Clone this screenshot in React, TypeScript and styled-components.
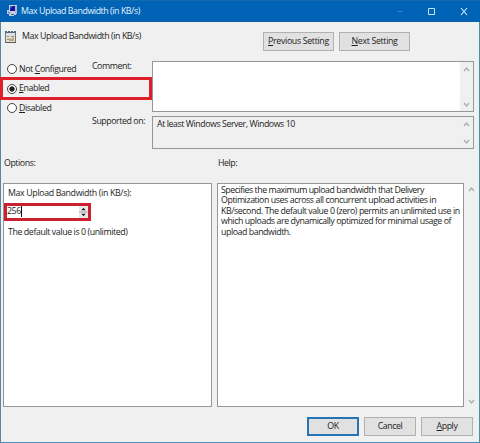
import React from "react";
import styled, { createGlobalStyle } from "styled-components";

const Global = createGlobalStyle`
  * { box-sizing: border-box; }
  body { margin: 0; overflow: hidden; }
`;

const Window = styled.div`
  width: 480px;
  height: 443px;
  display: flex;
  flex-direction: column;
  background: #f0f0f0;
  border: solid;
  border-width: 0 1px 1px;
  border-color: #357b9e #4593aa #4a8fbd #5588a0;
  font-family: "Open Sans", "Noto Sans", sans-serif;
  font-size: 8.8px;
  line-height: 13px;
  color: #1c1c1c;
`;

const Label = styled.span<{ $track?: number }>`
  white-space: nowrap;
  letter-spacing: ${(p) => p.$track ?? -0.43}px;
`;

const TitleBar = styled.header`
  height: 22px;
  flex: none;
  margin: 0 -1px;
  padding: 0 12px 0 7px;
  display: flex;
  align-items: center;
  background: #0063b5;
  border-top: 1px solid #1269ae;
  border-bottom: 1px solid #0a5da6;
  color: #e6f3ff;
`;

const TitleText = styled(Label)`
  margin-left: 3px;
  flex: 1;
`;

const Caption = styled.div`
  display: flex;
  align-items: center;
`;

const Header = styled.div`
  height: 39px;
  flex: none;
  display: flex;
  align-items: flex-start;
  padding: 9px 0 0 4px;
`;

const HeaderText = styled(Label)`
  margin: -1px 0 0 5px;
  width: 241px;
`;

const Button = styled.button<{ $primary?: boolean; $width?: number }>`
  width: ${(p) => p.$width ?? 52}px;
  height: 19px;
  flex: none;
  padding: 0 0 1px;
  display: flex;
  align-items: center;
  justify-content: center;
  font: inherit;
  color: #1c1c1c;
  background: #e1e1e1;
  border: ${(p) => (p.$primary ? "2px solid #2674b3" : "1px solid #b0b0b0")};
`;

const NavButtons = styled.div`
  display: flex;
  gap: 5px;
  margin: 1px 0 0 0;
`;

const Key = styled.span`
  text-decoration: underline;
  text-underline-offset: 1px;
  text-decoration-thickness: 1px;
`;

const Settings = styled.section`
  height: 88px;
  flex: none;
  display: grid;
  grid-template-columns: 91px 60px 322px;
`;

const RadioGroup = styled.div`
  display: flex;
  flex-direction: column;
`;

const Radio = styled.label<{ $marked?: boolean }>`
  height: ${(p) => (p.$marked ? 23 : 16)}px;
  width: ${(p) => (p.$marked ? "152px" : "auto")};
  margin-left: ${(p) => (p.$marked ? "-1px" : "0")};
  padding-left: ${(p) => (p.$marked ? "4px" : "6px")};
  border: ${(p) => (p.$marked ? "3px solid #df202a" : "none")};
  display: flex;
  align-items: center;
  gap: 2px;
`;

const Dot = styled.span<{ $on?: boolean }>`
  width: 10px;
  height: 10px;
  flex: none;
  border: 1px solid #444;
  border-radius: 50%;
  background: ${(p) => (p.$on ? "radial-gradient(circle, #222 0 2.3px, #fff 3px)" : "#fff")};
`;

const FieldLabels = styled.div`
  display: flex;
  flex-direction: column;
  gap: 42px;
  margin-top: -1px;
`;

const Fields = styled.div`
  display: flex;
  flex-direction: column;
  gap: 4px;
`;

const Field = styled.div<{ $height: number; $readOnly?: boolean }>`
  height: ${(p) => p.$height}px;
  display: flex;
  justify-content: space-between;
  border: 1px solid #969696;
  background: ${(p) => (p.$readOnly ? "#f0f0f0" : "#fff")};
`;

const FieldText = styled(Label)`
  padding: 1px 0 0 4px;
`;

const Scroll = styled.div<{ $outer?: boolean }>`
  width: ${(p) => (p.$outer ? 12 : 13)}px;
  padding: ${(p) => (p.$outer ? "4px 0 3px" : "5px 0 4px")};
  display: flex;
  flex-direction: column;
  align-items: center;
  justify-content: space-between;
  background: #f0f0f0;
`;

const SectionLabels = styled.div`
  height: 34px;
  flex: none;
  display: grid;
  grid-template-columns: 214px 1fr;
  padding: 8px 0 0 3px;
`;

const Panels = styled.main`
  height: 224px;
  flex: none;
  display: grid;
  grid-template-columns: 209px 247px 12px;
  column-gap: 5px;
  padding-left: 2px;
  & > :last-child { margin-left: -4px; }
`;

const Panel = styled.div`
  background: #fff;
  border: 1px solid #969696;
  padding: 1px 3px;
  line-height: 10.45px;
`;

const Options = styled(Panel)`
  display: flex;
  flex-direction: column;
  align-items: flex-start;
  line-height: 13px;
  padding: 3px 0 0 4px;
`;

const Spinner = styled.div`
  width: 87px;
  height: 18px;
  margin: 3px 0 5px -4px;
  display: flex;
  align-items: center;
  justify-content: space-between;
  border: 3px solid #cb2030;
  background: #fff;
`;

const Value = styled(Label)`
  border-right: 1px solid #111;
  line-height: 11px;
  margin-top: -1px;
`;

const HelpLine = styled(Label)`
  display: block;
`;

const Footer = styled.footer`
  flex: 1;
  display: flex;
  justify-content: flex-end;
  gap: 5px;
  padding: 10px 6px 0 0;
`;

const Chevron = ({ down = false }: { down?: boolean }) => (
  <svg width="7" height="5" viewBox="0 0 7 5" fill="none" stroke="#aaa" strokeWidth="1.2">
    <path d={down ? "M1 1l2.5 3L6 1" : "M1 4l2.5-3L6 4"} />
  </svg>
);

const ComputerIcon = () => (
  <svg width="11" height="12" viewBox="0 0 11 12">
    <path d="M2 0h8v8H2z" fill="#c9cee6" />
    <path d="M3 1h5v5H3z" fill="#15109c" />
    <path d="M3 1h3L3 4z" fill="#4658d4" />
    <path d="M8 1h2v8H8z" fill="#b4b6cc" />
    <path d="M0 5h2v2h2v1h5v2H7v1H2V9H0z" fill="#b9c9e2" />
    <path d="M1 7h2v1H1zM4 9h3v1H4z" fill="#576d9a" />
  </svg>
);

const PolicyIcon = () => (
  <svg width="12" height="13" viewBox="0 0 12 13">
    <path d="M.5.5h10v11H.5z" fill="#e3ded0" stroke="#73777a" />
    <path d="M0 0h11v2H0z" fill="#54687c" />
    <path d="M2 0h1v1H2zM5 0h1v1H5zM8 0h1v1H8z" fill="#dce8ee" />
    <path d="M1 2h9v2H1z" fill="#dde1e5" />
    <path d="M2 5h2v1H2zM6 5h3v1H6zM2 8h2v1H2z" fill="#8d9091" />
    <path d="M4 7l2 1 3-2v4H4z" fill="#b9a984" />
    <path d="M0 11h11v1H0z" fill="#5d5d59" />
  </svg>
);

const CaptionIcons = () => (
  <svg width="72" height="9" viewBox="0 0 72 9" fill="none">
    <path d="M1 4.5h6" stroke="#2c82bf" />
    <path d="M32.5 1.5h6v6h-6z" stroke="#c4e4f8" />
    <path d="M65 1l6 7M71 1l-6 7" stroke="#d3edfa" strokeWidth="1.1" />
  </svg>
);

const SpinArrows = () => (
  <svg width="9" height="12" viewBox="0 0 9 12">
    <path d="M0 0h9v12H0z" fill="#e8e8e8" />
    <path d="M0 6h9" stroke="#aaa" />
    <path d="M4.5 1.8L6.7 4.2H2.3zM4.5 10.2L2.3 7.8h4.4z" fill="#222" />
  </svg>
);

const help: [string, number][] = [
  ["Specifies the maximum upload bandwidth that Delivery", -0.46],
  ["Optimization uses across all concurrent upload activities in", -0.42],
  ["KB/second. The default value 0 (zero) permits an unlimited use in", -0.42],
  ["which uploads are dynamically optimized for minimal usage of", -0.42],
  ["upload bandwidth.", -0.44],
];

export default function App() {
  return (
    <>
      <Global />
      <Window>
        <TitleBar>
          <ComputerIcon />
          <TitleText>Max Upload Bandwidth (in KB/s)</TitleText>
          <Caption><CaptionIcons /></Caption>
        </TitleBar>
        <Header>
          <PolicyIcon />
          <HeaderText>Max Upload Bandwidth (in KB/s)</HeaderText>
          <NavButtons>
            <Button $width={71}><Label $track={-0.33}><Key>P</Key>revious Setting</Label></Button>
            <Button $width={71}><Label $track={-0.33}><Key>N</Key>ext Setting</Label></Button>
          </NavButtons>
        </Header>
        <Settings>
          <RadioGroup>
            <Radio><Dot /><Label $track={-0.4}>Not <Key>C</Key>onfigured</Label></Radio>
            <Radio $marked><Dot $on /><Label $track={-0.4}><Key>E</Key>nabled</Label></Radio>
            <Radio><Dot /><Label $track={-0.4}><Key>D</Key>isabled</Label></Radio>
          </RadioGroup>
          <FieldLabels>
            <Label>Comment:</Label>
            <Label>Supported on:</Label>
          </FieldLabels>
          <Fields>
            <Field $height={51}>
              <span />
              <Scroll><Chevron /><Chevron down /></Scroll>
            </Field>
            <Field $height={33} $readOnly>
              <FieldText>At least Windows Server, Windows 10</FieldText>
              <Scroll><Chevron /><Chevron down /></Scroll>
            </Field>
          </Fields>
        </Settings>
        <SectionLabels>
          <Label>Options:</Label>
          <Label>Help:</Label>
        </SectionLabels>
        <Panels>
          <Options>
            <Label $track={-0.35}>Max Upload Bandwidth (in KB/s):</Label>
            <Spinner>
              <Value>256</Value>
              <SpinArrows />
            </Spinner>
            <Label $track={-0.4}>The default value is 0 (unlimited)</Label>
          </Options>
          <Panel>
            {help.map(([text, track]) => (
              <HelpLine key={text} $track={track}>{text}</HelpLine>
            ))}
          </Panel>
          <Scroll $outer><Chevron /><Chevron down /></Scroll>
        </Panels>
        <Footer>
          <Button $primary><Label>OK</Label></Button>
          <Button><Label>Cancel</Label></Button>
          <Button><Label><Key>A</Key>pply</Label></Button>
        </Footer>
      </Window>
    </>
  );
}
